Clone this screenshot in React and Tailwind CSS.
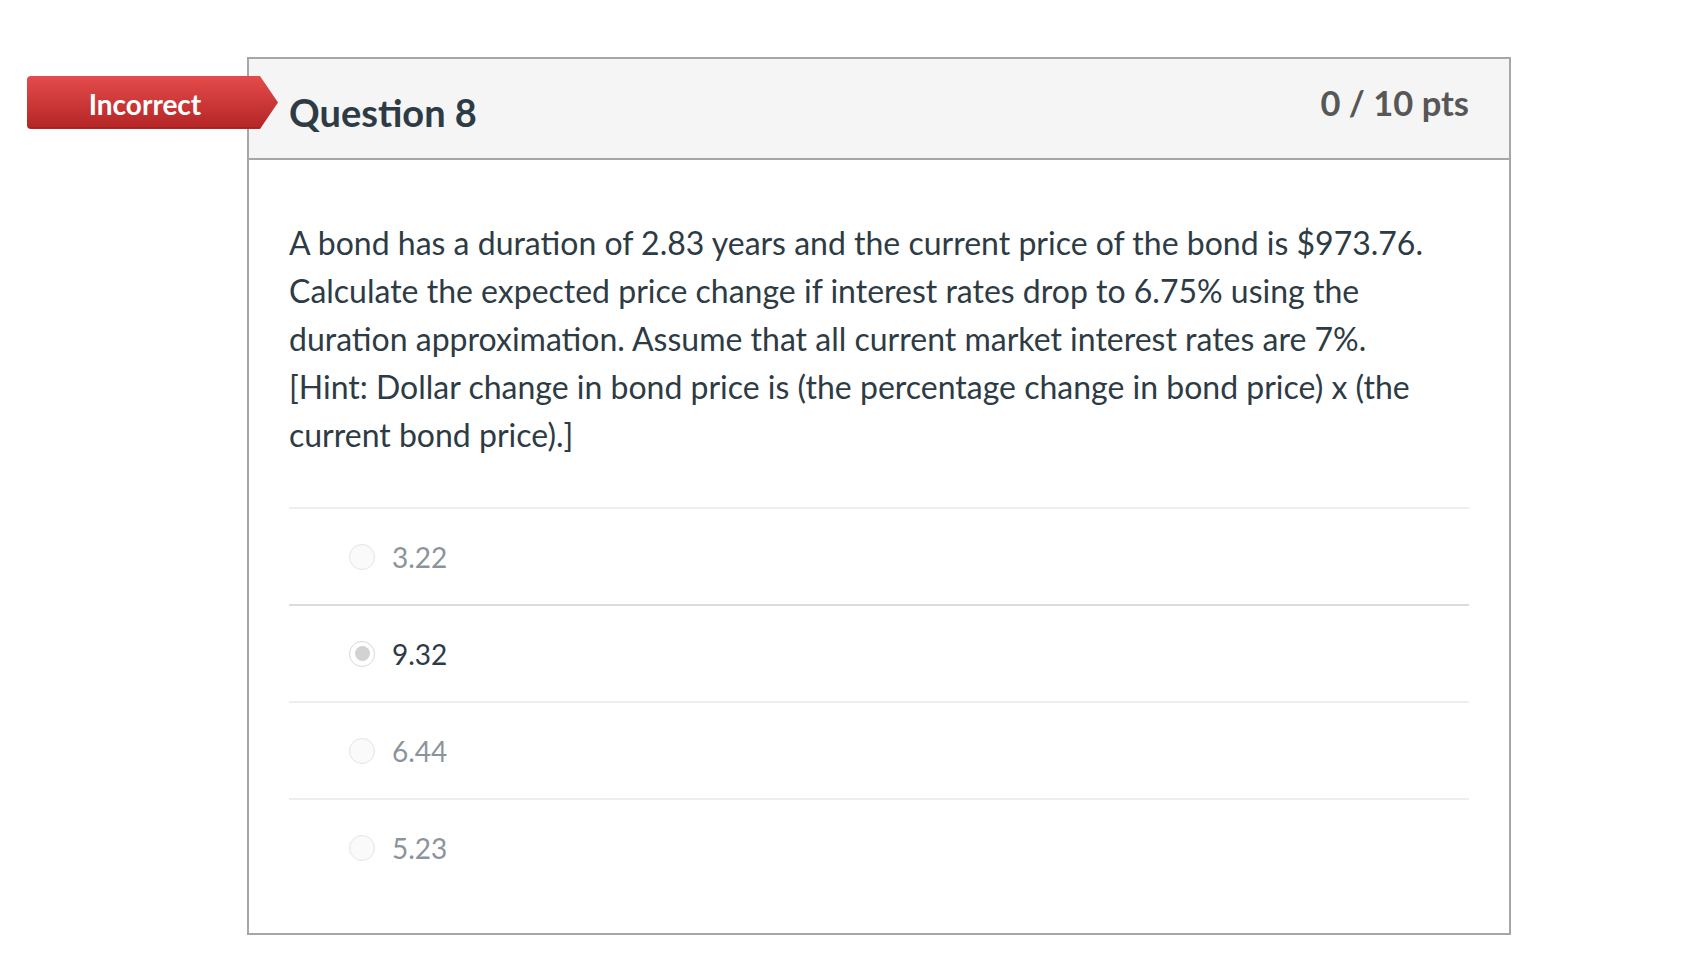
import React from "react";

const answers = [
  { v: "3.22", sel: false, line: "border-[#eeeeee]" },
  { v: "9.32", sel: true, line: "border-[#dcdcdc]" },
  { v: "6.44", sel: false, line: "border-[#eeeeee]" },
  { v: "5.23", sel: false, line: "border-[#eeeeee]" },
];

function Badge() {
  return (
    <div className="absolute left-[27px] top-[76px] h-[53px] w-[252px]">
      <svg width="252" height="53" viewBox="0 0 252 53" className="absolute inset-0">
        <defs>
          <linearGradient id="bg" x1="0" y1="0" x2="0" y2="1">
            <stop offset="0" stopColor="#e54b4b" />
            <stop offset="1" stopColor="#b32525" />
          </linearGradient>
        </defs>
        <path d="M4,0 H233 L251,26.5 L233,53 H4 Q0,53 0,49 V4 Q0,0 4,0 Z" fill="url(#bg)" />
        <path d="M1,51.5 H233.5" stroke="#9e1e1e" strokeOpacity="0.5" strokeWidth="1" />
      </svg>
      <div className="absolute left-0 top-0 flex h-[53px] w-[236px] items-center justify-center pt-[3px] text-[28px] font-bold text-white [font-family:Lato,'Noto_Sans',sans-serif]">
        Incorrect
      </div>
    </div>
  );
}

export default function App() {
  return (
    <div className="relative h-[970px] w-full bg-white pt-[57px] [font-family:Lato,'Noto_Sans',sans-serif]">
      <div className="ml-[247px] w-[1264px] border-2 border-[#a6a6a6]">
        <div className="flex h-[101px] items-start justify-between border-b-2 border-[#a6a6a6] bg-[#f5f5f5] px-[40px]">
          <div className="mt-[29px] text-[38px] font-bold leading-[48px] text-[#2d3b45]">Question 8</div>
          <div className="mt-[22px] text-[34.5px] font-bold leading-[44px] text-[#575757]">0 / 10 pts</div>
        </div>
        <div className="px-[40px] pb-[38px] pt-[59px]">
          <p className="mr-[30px] text-[32px] leading-[48px] text-[#2d3b45]">
            A bond has a duration of 2.83 years and the current price of the bond is $973.76. Calculate the expected
            price change if interest rates drop to 6.75% using the duration approximation. Assume that all current
            market interest rates are 7%. [Hint: Dollar change in bond price is (the percentage change in bond price) x
            (the current bond price).]
          </p>
          <div className="mt-[48px]">
            {answers.map((a) => (
              <div key={a.v} className={`flex h-[97px] items-center border-t-2 ${a.line} pl-[60px]`}>
                {a.sel ? (
                  <div className="flex h-[26px] w-[26px] items-center justify-center rounded-full border border-[#d8d8d8] bg-white">
                    <div className="h-[15px] w-[15px] rounded-full bg-[#d2d2d2]" />
                  </div>
                ) : (
                  <div className="h-[26px] w-[26px] rounded-full border border-[#e4e4e4] bg-[#fafafa]" />
                )}
                <span
                  className={`ml-[17px] text-[28px] leading-[36px] ${a.sel ? "text-[#2d3b45]" : "text-[#8b949c]"}`}
                >
                  {a.v}
                </span>
              </div>
            ))}
          </div>
        </div>
      </div>
      <Badge />
    </div>
  );
}
